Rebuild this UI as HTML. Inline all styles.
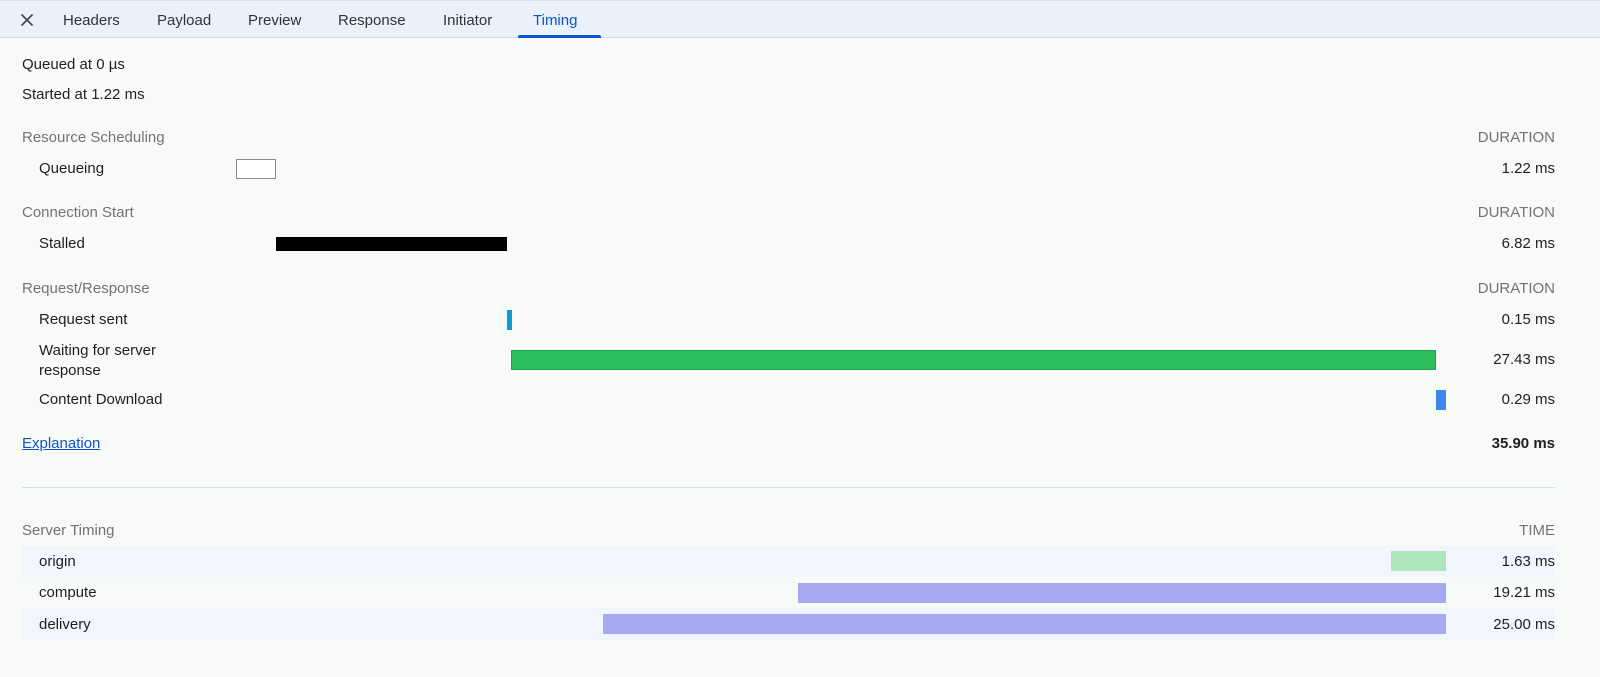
<!DOCTYPE html>
<html><head><meta charset="utf-8"><style>
*{margin:0;padding:0;box-sizing:border-box}
body{width:1600px;height:677px;background:#f8faf8;font-family:"Liberation Sans",sans-serif;font-size:15px;color:#1f1f1f;position:relative;overflow:hidden}
.t{position:absolute;line-height:18px;white-space:nowrap}
.g{color:#737373}
.r{right:45px;text-align:right}
.b{position:absolute}
#tabs{position:absolute;left:0;top:0;width:1600px;height:38px;background:#ebf1fb;border-top:1px solid #d6e0f0;border-bottom:1px solid #cfdcf0}
#tabs .t{top:11px;color:#333}
</style></head><body>
<div id="tabs">
<svg class="b" style="left:20px;top:12px" width="14" height="14" viewBox="0 0 14 14"><path d="M1.5 1.5L12.5 12.5M12.5 1.5L1.5 12.5" stroke="#444" stroke-width="1.6"/></svg>
<div class="t" style="left:63px">Headers</div>
<div class="t" style="left:157px">Payload</div>
<div class="t" style="left:248px">Preview</div>
<div class="t" style="left:338px">Response</div>
<div class="t" style="left:443px">Initiator</div>
<div class="t" style="left:533px;color:#0b57d0">Timing</div>
<div class="b" style="left:518px;top:34px;width:83px;height:3px;background:#0b57d0;border-radius:2px 2px 0 0"></div>
</div>
<div class="t" style="left:22px;top:56px">Queued at 0 µs</div>
<div class="t" style="left:22px;top:86px">Started at 1.22 ms</div>

<div class="t g" style="left:22px;top:129px">Resource Scheduling</div>
<div class="t g r" style="top:129px">DURATION</div>
<div class="t" style="left:39px;top:160px">Queueing</div>
<div class="b" style="left:236px;top:159px;width:40px;height:20px;border:1px solid #8a8a8a;background:#fff"></div>
<div class="t r" style="top:160px">1.22 ms</div>

<div class="t g" style="left:22px;top:204px">Connection Start</div>
<div class="t g r" style="top:204px">DURATION</div>
<div class="t" style="left:39px;top:235px">Stalled</div>
<div class="b" style="left:276px;top:237px;width:231px;height:14px;background:#000"></div>
<div class="t r" style="top:235px">6.82 ms</div>

<div class="t g" style="left:22px;top:280px">Request/Response</div>
<div class="t g r" style="top:280px">DURATION</div>
<div class="t" style="left:39px;top:311px">Request sent</div>
<div class="b" style="left:507px;top:310px;width:5px;height:20px;background:#0aa0c8"></div>
<div class="t r" style="top:311px">0.15 ms</div>
<div class="t" style="left:39px;top:341px;line-height:20px">Waiting for server<br>response</div>
<div class="b" style="left:511px;top:350px;width:925px;height:20px;background:#2dbf5d;border:1px solid #22a34e"></div>
<div class="t r" style="top:351px">27.43 ms</div>
<div class="t" style="left:39px;top:391px">Content Download</div>
<div class="b" style="left:1436px;top:390px;width:10px;height:20px;background:#3b86ef"></div>
<div class="t r" style="top:391px">0.29 ms</div>

<div class="t" style="left:22px;top:435px;color:#0b57d0;text-decoration:underline">Explanation</div>
<div class="t r" style="top:435px;font-weight:bold">35.90 ms</div>

<div class="b" style="left:22px;top:487px;width:1533px;height:1px;background:#d3e0f3"></div>

<div class="t g" style="left:22px;top:522px">Server Timing</div>
<div class="t g r" style="top:522px">TIME</div>
<div class="b" style="left:22px;top:546px;width:1533px;height:31px;background:#f1f6fc"></div>
<div class="b" style="left:22px;top:608px;width:1533px;height:32px;background:#f1f6fc"></div>
<div class="t" style="left:39px;top:553px">origin</div>
<div class="b" style="left:1391px;top:551px;width:55px;height:20px;background:#aee6c0"></div>
<div class="t r" style="top:553px">1.63 ms</div>
<div class="t" style="left:39px;top:584px">compute</div>
<div class="b" style="left:798px;top:583px;width:648px;height:20px;background:#a6a9f0"></div>
<div class="t r" style="top:584px">19.21 ms</div>
<div class="t" style="left:39px;top:616px">delivery</div>
<div class="b" style="left:603px;top:614px;width:843px;height:20px;background:#a6a9f0"></div>
<div class="t r" style="top:616px">25.00 ms</div>
</body></html>
